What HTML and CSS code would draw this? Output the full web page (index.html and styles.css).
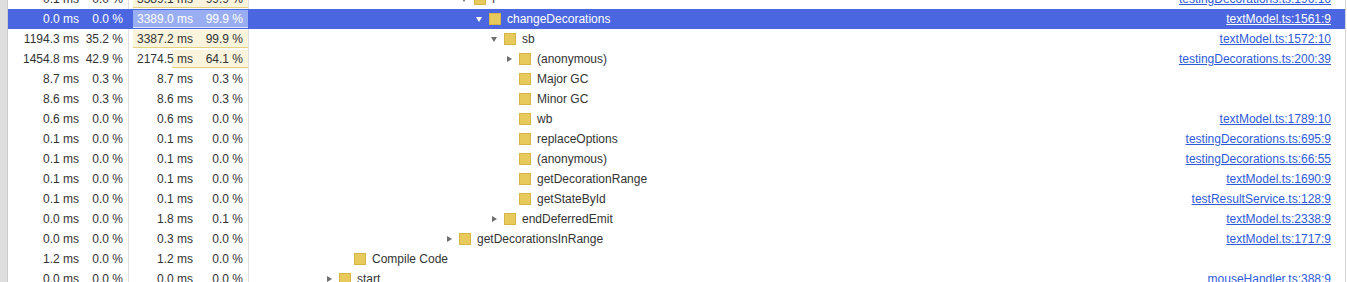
FILE: index.html
```html
<!DOCTYPE html>
<html lang="en">
<head>
  <meta charset="UTF-8">
  <title>Call Tree</title>
  <link rel="stylesheet" href="styles.css">
</head>
<body>
  <div class="panel">
    <div class="gutter"></div>
    <div class="tree">
      <div class="row">
        <div class="self"><span class="ms">0.1 ms</span><span class="pct">0.0 %</span></div>
        <div class="total"><div class="bar" style="width: 99.9%"></div><span class="ms">3389.1 ms</span><span class="pct">99.9 %</span></div>
        <div class="activity" style="--level: 9"><span class="toggle open"></span><span class="swatch"></span><span class="name">f</span><a class="url" href="#">testingDecorations.ts:196:16</a></div>
      </div>
      <div class="row selected">
        <div class="self"><span class="ms">0.0 ms</span><span class="pct">0.0 %</span></div>
        <div class="total"><div class="bar" style="width: 99.9%"></div><span class="ms">3389.0 ms</span><span class="pct">99.9 %</span></div>
        <div class="activity" style="--level: 10"><span class="toggle open"></span><span class="swatch"></span><span class="name">changeDecorations</span><a class="url" href="#">textModel.ts:1561:9</a></div>
      </div>
      <div class="row">
        <div class="self"><span class="ms">1194.3 ms</span><span class="pct">35.2 %</span></div>
        <div class="total"><div class="bar" style="width: 99.9%"></div><span class="ms">3387.2 ms</span><span class="pct">99.9 %</span></div>
        <div class="activity" style="--level: 11"><span class="toggle open"></span><span class="swatch"></span><span class="name">sb</span><a class="url" href="#">textModel.ts:1572:10</a></div>
      </div>
      <div class="row">
        <div class="self"><span class="ms">1454.8 ms</span><span class="pct">42.9 %</span></div>
        <div class="total"><div class="bar" style="width: 64.1%"></div><span class="ms">2174.5 ms</span><span class="pct">64.1 %</span></div>
        <div class="activity" style="--level: 12"><span class="toggle closed"></span><span class="swatch"></span><span class="name">(anonymous)</span><a class="url" href="#">testingDecorations.ts:200:39</a></div>
      </div>
      <div class="row">
        <div class="self"><span class="ms">8.7 ms</span><span class="pct">0.3 %</span></div>
        <div class="total"><span class="ms">8.7 ms</span><span class="pct">0.3 %</span></div>
        <div class="activity" style="--level: 12"><span class="toggle"></span><span class="swatch"></span><span class="name">Major GC</span></div>
      </div>
      <div class="row">
        <div class="self"><span class="ms">8.6 ms</span><span class="pct">0.3 %</span></div>
        <div class="total"><span class="ms">8.6 ms</span><span class="pct">0.3 %</span></div>
        <div class="activity" style="--level: 12"><span class="toggle"></span><span class="swatch"></span><span class="name">Minor GC</span></div>
      </div>
      <div class="row">
        <div class="self"><span class="ms">0.6 ms</span><span class="pct">0.0 %</span></div>
        <div class="total"><span class="ms">0.6 ms</span><span class="pct">0.0 %</span></div>
        <div class="activity" style="--level: 12"><span class="toggle"></span><span class="swatch"></span><span class="name">wb</span><a class="url" href="#">textModel.ts:1789:10</a></div>
      </div>
      <div class="row">
        <div class="self"><span class="ms">0.1 ms</span><span class="pct">0.0 %</span></div>
        <div class="total"><span class="ms">0.1 ms</span><span class="pct">0.0 %</span></div>
        <div class="activity" style="--level: 12"><span class="toggle"></span><span class="swatch"></span><span class="name">replaceOptions</span><a class="url" href="#">testingDecorations.ts:695:9</a></div>
      </div>
      <div class="row">
        <div class="self"><span class="ms">0.1 ms</span><span class="pct">0.0 %</span></div>
        <div class="total"><span class="ms">0.1 ms</span><span class="pct">0.0 %</span></div>
        <div class="activity" style="--level: 12"><span class="toggle"></span><span class="swatch"></span><span class="name">(anonymous)</span><a class="url" href="#">testingDecorations.ts:66:55</a></div>
      </div>
      <div class="row">
        <div class="self"><span class="ms">0.1 ms</span><span class="pct">0.0 %</span></div>
        <div class="total"><span class="ms">0.1 ms</span><span class="pct">0.0 %</span></div>
        <div class="activity" style="--level: 12"><span class="toggle"></span><span class="swatch"></span><span class="name">getDecorationRange</span><a class="url" href="#">textModel.ts:1690:9</a></div>
      </div>
      <div class="row">
        <div class="self"><span class="ms">0.1 ms</span><span class="pct">0.0 %</span></div>
        <div class="total"><span class="ms">0.1 ms</span><span class="pct">0.0 %</span></div>
        <div class="activity" style="--level: 12"><span class="toggle"></span><span class="swatch"></span><span class="name">getStateById</span><a class="url" href="#">testResultService.ts:128:9</a></div>
      </div>
      <div class="row">
        <div class="self"><span class="ms">0.0 ms</span><span class="pct">0.0 %</span></div>
        <div class="total"><span class="ms">1.8 ms</span><span class="pct">0.1 %</span></div>
        <div class="activity" style="--level: 11"><span class="toggle closed"></span><span class="swatch"></span><span class="name">endDeferredEmit</span><a class="url" href="#">textModel.ts:2338:9</a></div>
      </div>
      <div class="row">
        <div class="self"><span class="ms">0.0 ms</span><span class="pct">0.0 %</span></div>
        <div class="total"><span class="ms">0.3 ms</span><span class="pct">0.0 %</span></div>
        <div class="activity" style="--level: 8"><span class="toggle closed"></span><span class="swatch"></span><span class="name">getDecorationsInRange</span><a class="url" href="#">textModel.ts:1717:9</a></div>
      </div>
      <div class="row">
        <div class="self"><span class="ms">1.2 ms</span><span class="pct">0.0 %</span></div>
        <div class="total"><span class="ms">1.2 ms</span><span class="pct">0.0 %</span></div>
        <div class="activity" style="--level: 1"><span class="toggle"></span><span class="swatch"></span><span class="name">Compile Code</span></div>
      </div>
      <div class="row">
        <div class="self"><span class="ms">0.0 ms</span><span class="pct">0.0 %</span></div>
        <div class="total"><span class="ms">0.0 ms</span><span class="pct">0.0 %</span></div>
        <div class="activity" style="--level: 0"><span class="toggle closed"></span><span class="swatch"></span><span class="name">start</span><a class="url" href="#">mouseHandler.ts:388:9</a></div>
      </div>
    </div>
  </div>
</body>
</html>
```

FILE: styles.css
```css
body {
  margin: 0;
  background-color: #ffffff;
  font-family: "Liberation Sans", Arial, sans-serif;
  font-size: 12px;
  color: #333333;
  overflow: hidden;
}

.panel {
  display: flex;
  height: 282px;
  overflow: hidden;
}

.gutter {
  width: 7px;
  flex: none;
  background-color: #dedede;
  border-right: 1px solid #cccccc;
}

.tree {
  flex: 1;
  margin-top: -11px;
  border-right: 1px solid #d4d4d4;
  margin-right: 1px;
}

.row {
  display: flex;
  height: 20px;
  line-height: 20px;
  white-space: nowrap;
}

.self,
.total {
  display: flex;
  justify-content: flex-end;
  flex: none;
  padding-right: 5px;
  border-right: 1px solid #e0e0e0;
}

.self {
  width: 115px;
}

.self .pct {
  width: 44px;
  text-align: right;
}

.total {
  position: relative;
  width: 114px;
}

.total .pct {
  width: 50px;
  text-align: right;
}

.total span {
  position: relative;
}

.bar {
  position: absolute;
  top: 1px;
  bottom: 1px;
  right: 0;
  max-width: 115px;
  background-color: #faf4dc;
  border-bottom: 1px solid #e6d17c;
}

.activity {
  display: flex;
  align-items: center;
  flex: 1;
  padding-left: calc(76px + var(--level) * 15px);
  padding-right: 14px;
}

.toggle {
  width: 14px;
  height: 20px;
  flex: none;
  position: relative;
}

.toggle.open::before {
  content: "";
  position: absolute;
  left: 1px;
  top: 8px;
  border-left: 3px solid transparent;
  border-right: 3px solid transparent;
  border-top: 5px solid #6e6e6e;
}

.toggle.closed::before {
  content: "";
  position: absolute;
  left: 2px;
  top: 7px;
  border-top: 3px solid transparent;
  border-bottom: 3px solid transparent;
  border-left: 5px solid #6e6e6e;
}

.swatch {
  width: 10px;
  height: 10px;
  flex: none;
  margin-right: 6px;
  background-color: #e8c95c;
  border: 1px solid #d6b547;
}

.name {
  flex: 1;
}

.url {
  color: #2f5bd8;
  text-decoration: underline;
}

.selected {
  background-color: #4a66e0;
  color: #ffffff;
}

.selected .self,
.selected .total {
  border-right-color: #4a66e0;
}

.selected .bar {
  background-color: #99aef2;
  border-bottom-color: #dfe6fb;
}

.selected .toggle.open::before {
  border-top-color: #ffffff;
}

.selected .url {
  color: #ffffff;
}
```
